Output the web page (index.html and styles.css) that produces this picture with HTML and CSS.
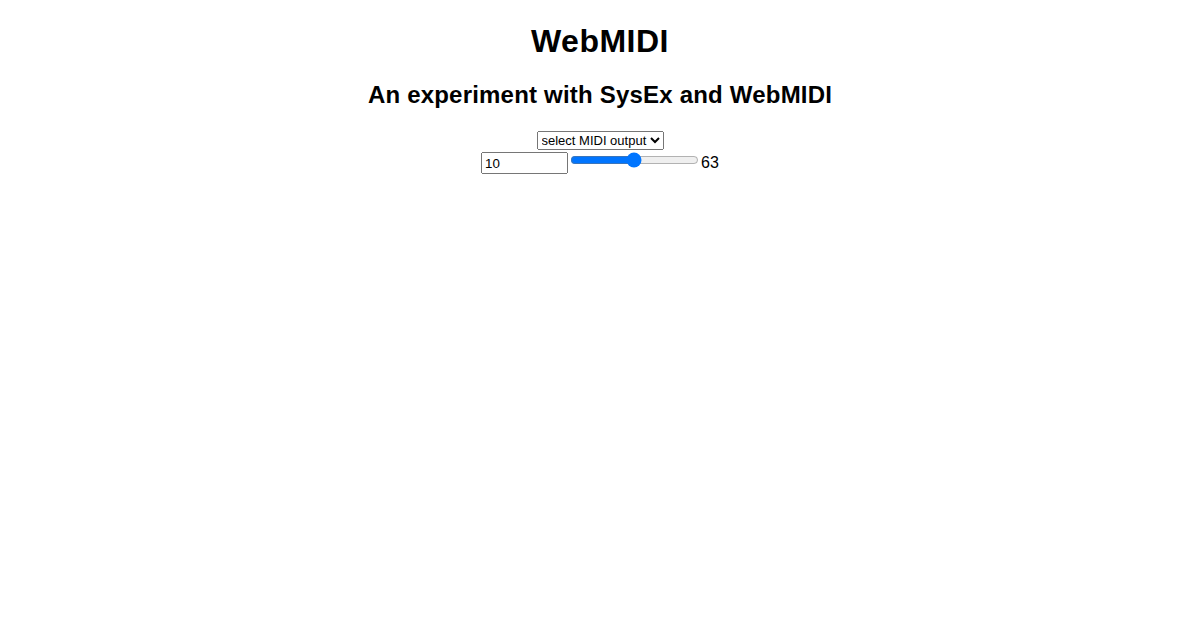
FILE: index.html
```html
<!DOCTYPE html>
<html>
<head>
  <meta charset="UTF-8">
  <title>WebMIDI</title>
  <link rel="stylesheet" href="styles.css">
</head>
<body>
  <h1>WebMIDI</h1>
  <h2>An experiment with SysEx and WebMIDI</h2>

  <div class="controls">
    <select id="midiOut">
      <option>select MIDI output</option>
    </select>
    <br>
    <input type="text" id="value" class="value-box" value="10"><input type="range" id="slider" min="0" max="127" value="63"><span id="sliderVal">63</span>
  </div>

  <script>
    const slider = document.getElementById("slider");
    const sliderVal = document.getElementById("sliderVal");
    slider.addEventListener("input", () => sliderVal.textContent = slider.value);
  </script>
</body>
</html>
```

FILE: styles.css
```css
body {
  font-family: 'Liberation Sans', Arial, sans-serif;
  text-align: center;
  background: #fff;
  color: #000;
}
h1 {
  margin-top: 15px;
  letter-spacing: 0.5px;
}
h2 {
  letter-spacing: 0.2px;
}
.controls {
  font-size: 16px;
  padding-top: 2px;
}
.value-box {
  width: 79px;
  padding-top: 2px;
  font-family: 'Liberation Sans', Arial, sans-serif;
}
select {
  font-size: 13px;
  font-family: 'Liberation Sans', Arial, sans-serif;
}
```
